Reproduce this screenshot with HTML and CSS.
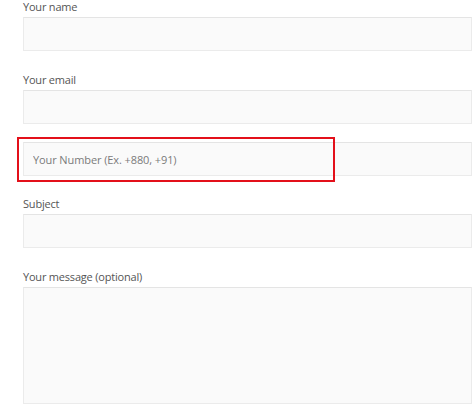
FILE: index.html
```
<!DOCTYPE html>
<html>
<head>
<meta charset="utf-8">
<link rel="stylesheet" href="styles.css">
</head>
<body>
<form class="form">
  <div class="field">
    <label class="label">Your name</label>
    <input class="input" type="text">
  </div>
  <div class="field">
    <label class="label">Your email</label>
    <input class="input" type="email">
  </div>
  <div class="field field-phone">
    <input class="input" type="tel" placeholder="Your Number (Ex. +880, +91)">
    <div class="highlight"></div>
  </div>
  <div class="field">
    <label class="label">Subject</label>
    <input class="input" type="text">
  </div>
  <div class="field">
    <label class="label">Your message (optional)</label>
    <textarea class="input textarea"></textarea>
  </div>
</form>
</body>
</html>
```
FILE: styles.css
```
html, body {
  margin: 0;
  padding: 0;
  background: #ffffff;
}
body {
  font-family: "Open Sans", "Liberation Sans", sans-serif;
  font-size: 11px;
  color: #555555;
  overflow: hidden;
}
.form {
  display: flex;
  flex-direction: column;
  padding: 0 2px 0 23px;
  margin-top: -4px;
}
.field {
  display: flex;
  flex-direction: column;
  margin-bottom: 18px;
  position: relative;
}
.field-phone {
  margin-bottom: 17px;
}
.label {
  display: block;
  line-height: 21px;
  color: #555555;
  letter-spacing: -0.2px;
}
.input {
  box-sizing: border-box;
  width: 100%;
  height: 34px;
  margin: 0;
  border: 1px solid #ebebeb;
  border-top-color: #e4e4e4;
  background: #fafafa;
  font-family: "Open Sans", "Liberation Sans", sans-serif;
  font-size: 11px;
  letter-spacing: -0.1px;
  color: #555;
  padding: 0 9px;
  outline: none;
}
.input::placeholder {
  color: #7a7a7a;
}
.textarea {
  height: 117px;
  resize: none;
}
.highlight {
  position: absolute;
  left: -6px;
  top: -5px;
  width: 318px;
  height: 45px;
  box-sizing: border-box;
  border: 2px solid #e3101a;
}
```
